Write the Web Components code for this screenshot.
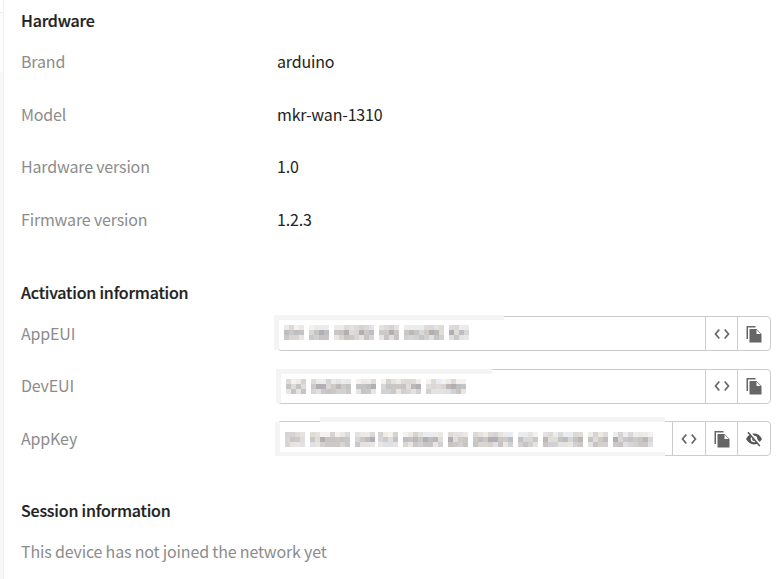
<!DOCTYPE html>
<html><head><meta charset="utf-8"><style>
html,body{margin:0;height:579px;overflow:hidden}
html{background:#fff}
body{background:linear-gradient(#fff 12px,#eee 12px,#eee 13px,#fdfdfd 13px,#fdfdfd 72px,#f8f8f8 72px) no-repeat 0 0/3px 100%;font:16px/24px "Noto Sans CJK SC","Source Sans Pro","Noto Sans",sans-serif;color:#222;letter-spacing:-.165px}
</style></head><body>
<template id="t-page"><style>
:host{display:block;box-sizing:border-box;height:579px;margin-left:3px;background:#fff;border-left:1px solid #f0f0f0;padding:8px 9px 0 17px}
</style><slot></slot></template>
<template id="t-sec"><style>
:host{display:block}
h3{margin:0;font-family:inherit;font-size:16px;line-height:24px;font-weight:500;letter-spacing:-.2px;color:#222;height:24px;-webkit-text-stroke:.2px #222}
</style><h3><slot name="title"></slot></h3><slot></slot></template>
<template id="t-row"><style>
:host{display:grid;grid-template-columns:256px 1fr;align-items:center;height:52.6px;color:#222}
.l{color:#8c8c8c}
:host([input]) .l{margin-top:-2px}
</style><div class="l"><slot name="label"></slot></div><div><slot></slot></div></template>
<template id="t-secret"><style>
:host{display:flex;position:relative;height:35px;box-sizing:border-box;border:1px solid #ccc;border-radius:4px;background:#fff}
.f{flex:1}
</style><div class="f"></div><slot></slot><slot name="mask"></slot></template>
<template id="t-btn"><style>
:host{display:flex;align-items:center;justify-content:center;width:32.67px;box-sizing:border-box;border-left:1px solid #ccc;color:#666}
svg{display:block}
</style><slot></slot></template>
<template id="t-mask"><style>
:host{position:absolute;display:block;inset:0;pointer-events:none}
.s{position:absolute;background:#f4f4f4}
.g{position:absolute;display:grid;grid-template-columns:repeat(4,5px);grid-auto-rows:5px;width:20px}
.g i{display:block}
</style><div id="r"></div></template>

<x-page>
<x-sec id="s1"><span slot="title">Hardware</span>
<x-row style="margin-top:3px"><span slot="label">Brand</span>arduino</x-row>
<x-row><span slot="label">Model</span>mkr-wan-1310</x-row>
<x-row><span slot="label">Hardware version</span>1.0</x-row>
<x-row><span slot="label">Firmware version</span>1.2.3</x-row>
</x-sec>
<x-sec style="margin-top:35px"><span slot="title">Activation information</span>
<x-row input style="margin-top:3px"><span slot="label">AppEUI</span>
<x-secret><x-btn><svg width="16" height="16" viewBox="0 0 16 16"><path d="M5.300 3.500 1.500 8l3.800 4.500M10.700 3.500 14.500 8l-3.800 4.500" fill="none" stroke="#666" stroke-width="1.700"/></svg></x-btn><x-btn><svg width="18" height="18" viewBox="0 0 18 18"><path d="M1.500 1h9v1.500H3V14H1.500z" fill="#666"/><path d="M4.500 4h7L16.500 9v8.500h-12z" fill="#666"/><path d="M11.500 4.800v4.200h4.200z" fill="#fff"/></svg></x-btn><x-mask slot="mask" data-v="1"></x-mask></x-secret></x-row>
<x-row input><span slot="label">DevEUI</span>
<x-secret><x-btn><svg width="16" height="16" viewBox="0 0 16 16"><path d="M5.300 3.500 1.500 8l3.800 4.500M10.700 3.500 14.500 8l-3.800 4.500" fill="none" stroke="#666" stroke-width="1.700"/></svg></x-btn><x-btn><svg width="18" height="18" viewBox="0 0 18 18"><path d="M1.500 1h9v1.500H3V14H1.500z" fill="#666"/><path d="M4.500 4h7L16.500 9v8.500h-12z" fill="#666"/><path d="M11.500 4.800v4.200h4.200z" fill="#fff"/></svg></x-btn><x-mask slot="mask" data-v="2"></x-mask></x-secret></x-row>
<x-row input><span slot="label">AppKey</span>
<x-secret><x-btn><svg width="16" height="16" viewBox="0 0 16 16"><path d="M5.300 3.500 1.500 8l3.800 4.500M10.700 3.500 14.500 8l-3.800 4.500" fill="none" stroke="#666" stroke-width="1.700"/></svg></x-btn><x-btn><svg width="18" height="18" viewBox="0 0 18 18"><path d="M1.500 1h9v1.500H3V14H1.500z" fill="#666"/><path d="M4.500 4h7L16.500 9v8.500h-12z" fill="#666"/><path d="M11.500 4.800v4.200h4.200z" fill="#fff"/></svg></x-btn><x-btn><svg width="18" height="18" viewBox="0 0 18 18"><path d="M1 9c2-3.600 4.800-5.400 8-5.400s6 1.800 8 5.400c-2 3.600-4.800 5.400-8 5.400S3 12.600 1 9z" fill="#555"/><circle cx="9" cy="9" r="3.300" fill="#fff"/><circle cx="9" cy="9" r="1.900" fill="#555"/><path d="M3.800 2 15.500 15" stroke="#fff" stroke-width="2.800"/><path d="M3 2.300 14.800 16" stroke="#555" stroke-width="1.500"/></svg></x-btn><x-mask slot="mask" data-v="3"></x-mask></x-secret></x-row>
</x-sec>
<x-sec style="margin-top:33px"><span slot="title">Session information</span>
<x-row style="height:58px;display:block;padding-top:17px;box-sizing:border-box"><span slot="label">This device has not joined the network yet</span></x-row>
</x-sec>
</x-page>
<script>
function def(n,t,extra){customElements.define(n,class extends HTMLElement{constructor(){super();this.attachShadow({mode:'open'}).appendChild(document.getElementById(t).content.cloneNode(true));}connectedCallback(){extra&&extra(this)}})}
var light=['#f4f1ee','#e4e3e1','#dcdad9','#efece8','#d6d4d3','#eaecef','#dfdbd7','#ece8e3'];
var dark=['#bdb8b6','#cbc7c5','#b2afb3','#d8d7d7','#bcbec1','#cfcac6','#e0dcd8','#c4c4c4'];
var mid=['#cbc8c7','#d8d5d2','#e4e3e1','#d1d1d4','#c8c4c3','#e8e5e2','#d3d1cf','#dee0e3'];
var seed=7;function rnd(){seed=(seed*61+23)%251;return seed}
var cfg={
1:{strips:[[-4,-2,230,5],[-4,-2,5,35]],x:6,y:8,g:[0,25,50,70,95,120,140,165]},
2:{strips:[[-2,-1,216,5],[-2,-1,5,34]],x:8,y:9,g:[0,25,45,70,95,115,140,160]},
3:{strips:[[42,-5,345,5],[-3,0,5,34],[-3,30,390,4]],x:7,y:10,g:[0,25,45,70,93,118,138,163,188,208,233,258,278,303,328,348]}
};
def('x-page','t-page');def('x-sec','t-sec');def('x-row','t-row');def('x-secret','t-secret');def('x-btn','t-btn');
def('x-mask','t-mask',function(el){
 var c=cfg[el.dataset.v],r=el.shadowRoot.getElementById('r'),h='';
 c.strips.forEach(function(s){h+='<div class="s" style="left:'+s[0]+'px;top:'+s[1]+'px;width:'+s[2]+'px;height:'+s[3]+'px"></div>'});
 c.g.forEach(function(x){h+='<div class="g" style="left:'+(c.x+x)+'px;top:'+c.y+'px">';
  for(var i=0;i<12;i++){var p=i<4?light:i<8?dark:mid;h+='<i style="background:'+p[rnd()%8]+'"></i>'}h+='</div>'});
 r.innerHTML=h;
});
</script>
</body></html>
